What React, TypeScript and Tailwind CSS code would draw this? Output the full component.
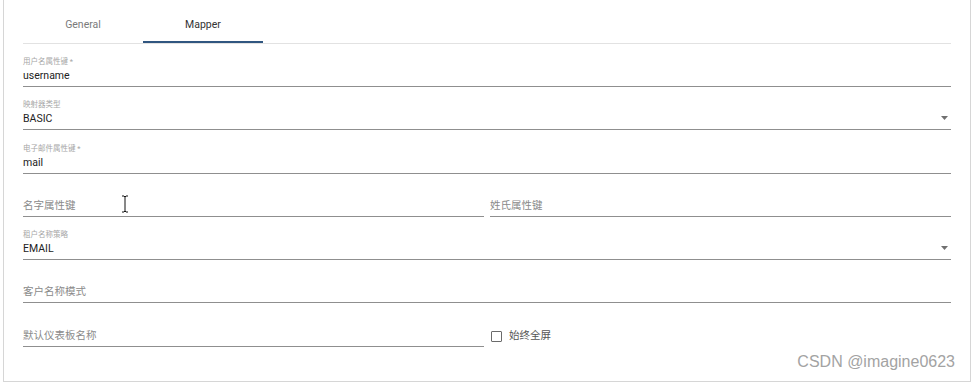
import React from "react";

const font = { fontFamily: 'Roboto, "Noto Sans CJK SC", sans-serif' };

function Arrow() {
  return (
    <svg width="7" height="4" viewBox="0 0 7 4" className="absolute right-[3px] bottom-[9px]">
      <path d="M0 0 L7 0 L3.5 4 Z" fill="#707070" />
    </svg>
  );
}

function Field({
  label,
  value,
  placeholder,
  select,
  h,
  className = "",
}: {
  label?: string;
  value?: string;
  placeholder?: string;
  select?: boolean;
  h: string;
  className?: string;
}) {
  return (
    <div className={`relative flex flex-col justify-end border-b border-[#8f8f8f] pb-[3px] ${h} ${className}`}>
      {label && (
        <div className="text-[7.5px] leading-[10px] text-[#a6a6a6] mb-[2px]">{label}</div>
      )}
      {value ? (
        <div className="text-[10.5px] leading-[14px] text-[#222]">{value}</div>
      ) : (
        <div className="text-[10.5px] leading-[14px] text-[#8a8a8a]">{placeholder}</div>
      )}
      {select && <Arrow />}
    </div>
  );
}

export default function App() {
  return (
    <div className="w-[972px] h-[383px] bg-white overflow-hidden" style={font}>
      <div className="relative ml-[3px] w-[968px] h-[382px] border-l border-r border-b border-[#d6d6d6] bg-white pl-[19px] pr-[19px]">
        <div className="flex h-[44px] border-b border-[#e2e2e2] pt-[9px]">
          <div className="w-[120px] flex items-center justify-center text-[10.5px] text-[#7a7a7a] pb-[2px]">
            General
          </div>
          <div className="w-[120px] flex items-center justify-center text-[10.5px] text-[#333] border-b-2 border-[#305680]">
            Mapper
          </div>
        </div>
        <div className="flex flex-col">
          <Field h="h-[43px]" label="用户名属性键 *" value="username" />
          <Field h="h-[43px]" label="映射器类型" value="BASIC" select />
          <Field h="h-[44px]" label="电子邮件属性键 *" value="mail" />
          <div className="flex gap-[6px] h-[43px]">
            <Field h="h-[43px]" className="flex-1" placeholder="名字属性键" />
            <Field h="h-[43px]" className="flex-1" placeholder="姓氏属性键" />
          </div>
          <Field h="h-[43px]" label="租户名称策略" value="EMAIL" select />
          <Field h="h-[43px]" placeholder="客户名称模式" />
          <div className="flex gap-[6px] h-[44px]">
            <Field h="h-[44px]" className="flex-1" placeholder="默认仪表板名称" />
            <div className="flex-1 flex items-end pb-[4px]">
              <div className="flex items-center gap-[7px]">
                <div className="w-[11px] h-[11px] border border-[#6b6b6b] rounded-[1px] ml-[1px]" />
                <span className="text-[10.5px] leading-[14px] text-[#555]">始终全屏</span>
              </div>
            </div>
          </div>
        </div>
        <svg
          width="8"
          height="18"
          viewBox="0 0 8 18"
          className="absolute left-[117px] top-[195px]"
        >
          <path d="M1 1 H3 L4 2 L5 1 H7 M4 2 V16 M1 17 H3 L4 16 L5 17 H7" stroke="#111" strokeWidth="1" fill="none" />
        </svg>
        <div
          className="absolute right-[15px] top-[352px] text-[16px] leading-[20px] text-[#a3a3a3]"
          style={{ fontFamily: '"Liberation Sans", Arial, sans-serif' }}
        >
          CSDN @imagine0623
        </div>
      </div>
    </div>
  );
}
